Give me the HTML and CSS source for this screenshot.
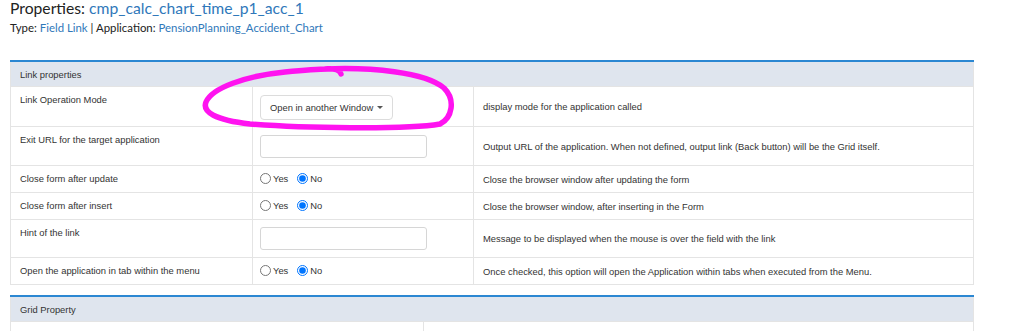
FILE: index.html
```html
<!DOCTYPE html>
<html>
<head>
<meta charset="utf-8">
<link rel="stylesheet" href="styles.css">
</head>
<body>
<div class="page">
  <div class="head">
    <h1 class="title">Properties: <a class="lnk">cmp_calc_chart_time_p1_acc_1</a></h1>
    <div class="sub">Type: <a class="lnk">Field Link</a> | Application: <a class="lnk">PensionPlanning_Accident_Chart</a></div>
  </div>

  <table class="props">
    <colgroup><col class="c1"><col class="c2"><col class="c3"></colgroup>
    <tr class="hdr"><td colspan="3">Link properties</td></tr>
    <tr class="r40">
      <td class="lbl">Link Operation Mode</td>
      <td class="ctl"><span class="sel">Open in another Window<span class="caret"></span></span></td>
      <td class="desc">display mode for the application called</td>
    </tr>
    <tr class="r39">
      <td class="lbl">Exit URL for the target application</td>
      <td class="ctl"><span class="inp"></span></td>
      <td class="desc">Output URL of the application. When not defined, output link (Back button) will be the Grid itself.</td>
    </tr>
    <tr class="r27">
      <td class="lbl">Close form after update</td>
      <td class="ctl"><label class="rad"><input type="radio" name="a">Yes</label><label class="rad"><input type="radio" name="a" checked>No</label></td>
      <td class="desc">Close the browser window after updating the form</td>
    </tr>
    <tr class="r27">
      <td class="lbl">Close form after insert</td>
      <td class="ctl"><label class="rad"><input type="radio" name="b">Yes</label><label class="rad"><input type="radio" name="b" checked>No</label></td>
      <td class="desc">Close the browser window, after inserting in the Form</td>
    </tr>
    <tr class="r38">
      <td class="lbl">Hint of the link</td>
      <td class="ctl"><span class="inp"></span></td>
      <td class="desc">Message to be displayed when the mouse is over the field with the link</td>
    </tr>
    <tr class="r27">
      <td class="lbl">Open the application in tab within the menu</td>
      <td class="ctl"><label class="rad"><input type="radio" name="c">Yes</label><label class="rad"><input type="radio" name="c" checked>No</label></td>
      <td class="desc">Once checked, this option will open the Application within tabs when executed from the Menu.</td>
    </tr>
  </table>

  <table class="props second">
    <colgroup><col class="d1"><col class="d2"></colgroup>
    <tr class="hdr"><td colspan="2">Grid Property</td></tr>
    <tr class="r40">
      <td class="lbl">Initial Mode</td>
      <td class="ctl"><span class="inp wide"></span></td>
    </tr>
  </table>

  <svg class="scribble" width="1024" height="331" viewBox="0 0 1024 331">
    <path d="M341 74 Q339 68 325 69 C370 67 425 72 444 88 C456 100 452 118 440 124 C405 130 300 128 250 124 C215 120 202 112 206 102 C212 88 245 76 285 72 C305 70 318 69 328 69" fill="none" stroke="#ff13f0" stroke-width="5.5" stroke-linecap="round" stroke-linejoin="round"/>
  </svg>
</div>
</body>
</html>
```
FILE: styles.css
```css
html, body {
  margin: 0;
  padding: 0;
  background: #fff;
}
.page {
  position: relative;
  padding: 0 10px;
  height: 331px;
  overflow: hidden;
  font-family: "Liberation Sans", Arial, sans-serif;
  color: #333;
}
.head {
  font-family: Lato, "Open Sans", sans-serif;
  height: 60px;
}
.title {
  margin: 0;
  font-size: 15.7px;
  font-weight: 400;
  line-height: 16px;
  color: #222;
}
.sub {
  margin-top: 5px;
  font-size: 11.4px;
  line-height: 14px;
  color: #222;
}
.lnk {
  color: #2f78ba;
  text-decoration: none;
}
.props {
  width: 963px;
  border-collapse: collapse;
  border-top: 2px solid #2b87d2;
  table-layout: fixed;
  font-size: 9.4px;
}
.props td {
  border: 1px solid #e4e4e4;
  padding: 0 9px;
  line-height: 13px;
}
.c1 { width: 242px; }
.c2 { width: 221px; }
.c3 { width: 500px; }
.d1 { width: 413px; }
.d2 { width: 550px; }
.hdr td {
  background: #dfe5ee;
  height: 24px;
  vertical-align: middle;
  color: #333;
  border-top: 0;
}
.r40 td { height: 39px; }
.r39 td { height: 38px; }
.r38 td { height: 37px; }
.r27 td { height: 26px; }
.props td.lbl {
  vertical-align: top;
  padding-top: 6px;
  box-sizing: border-box;
}
.props td.ctl {
  vertical-align: middle;
  padding: 0 7px;
}
.props td.desc {
  vertical-align: middle;
}
.sel {
  display: inline-flex;
  align-items: center;
  box-sizing: border-box;
  width: 133px;
  height: 25px;
  border: 1px solid #dcdcdc;
  border-radius: 4px;
  padding: 0 9px;
  color: #333;
  white-space: nowrap;
  position: relative;
  top: 1px;
}
.caret {
  margin-left: auto;
  width: 0;
  height: 0;
  border-left: 3px solid transparent;
  border-right: 3px solid transparent;
  border-top: 3px solid #555;
}
.inp {
  display: block;
  box-sizing: border-box;
  width: 167px;
  height: 23px;
  border: 1px solid #d6d6d6;
  border-radius: 3px;
  background: #fff;
}
.inp.wide {
  width: 132px;
  margin-top: 6px;
}
.rad {
  display: inline-flex;
  align-items: center;
  margin-right: 9px;
  color: #333;
}
.rad input {
  width: 11px;
  height: 11px;
  margin: 0 2px 0 0;
}
.second {
  margin-top: 10px;
}
.scribble {
  position: absolute;
  left: 0;
  top: 0;
  pointer-events: none;
}
```
